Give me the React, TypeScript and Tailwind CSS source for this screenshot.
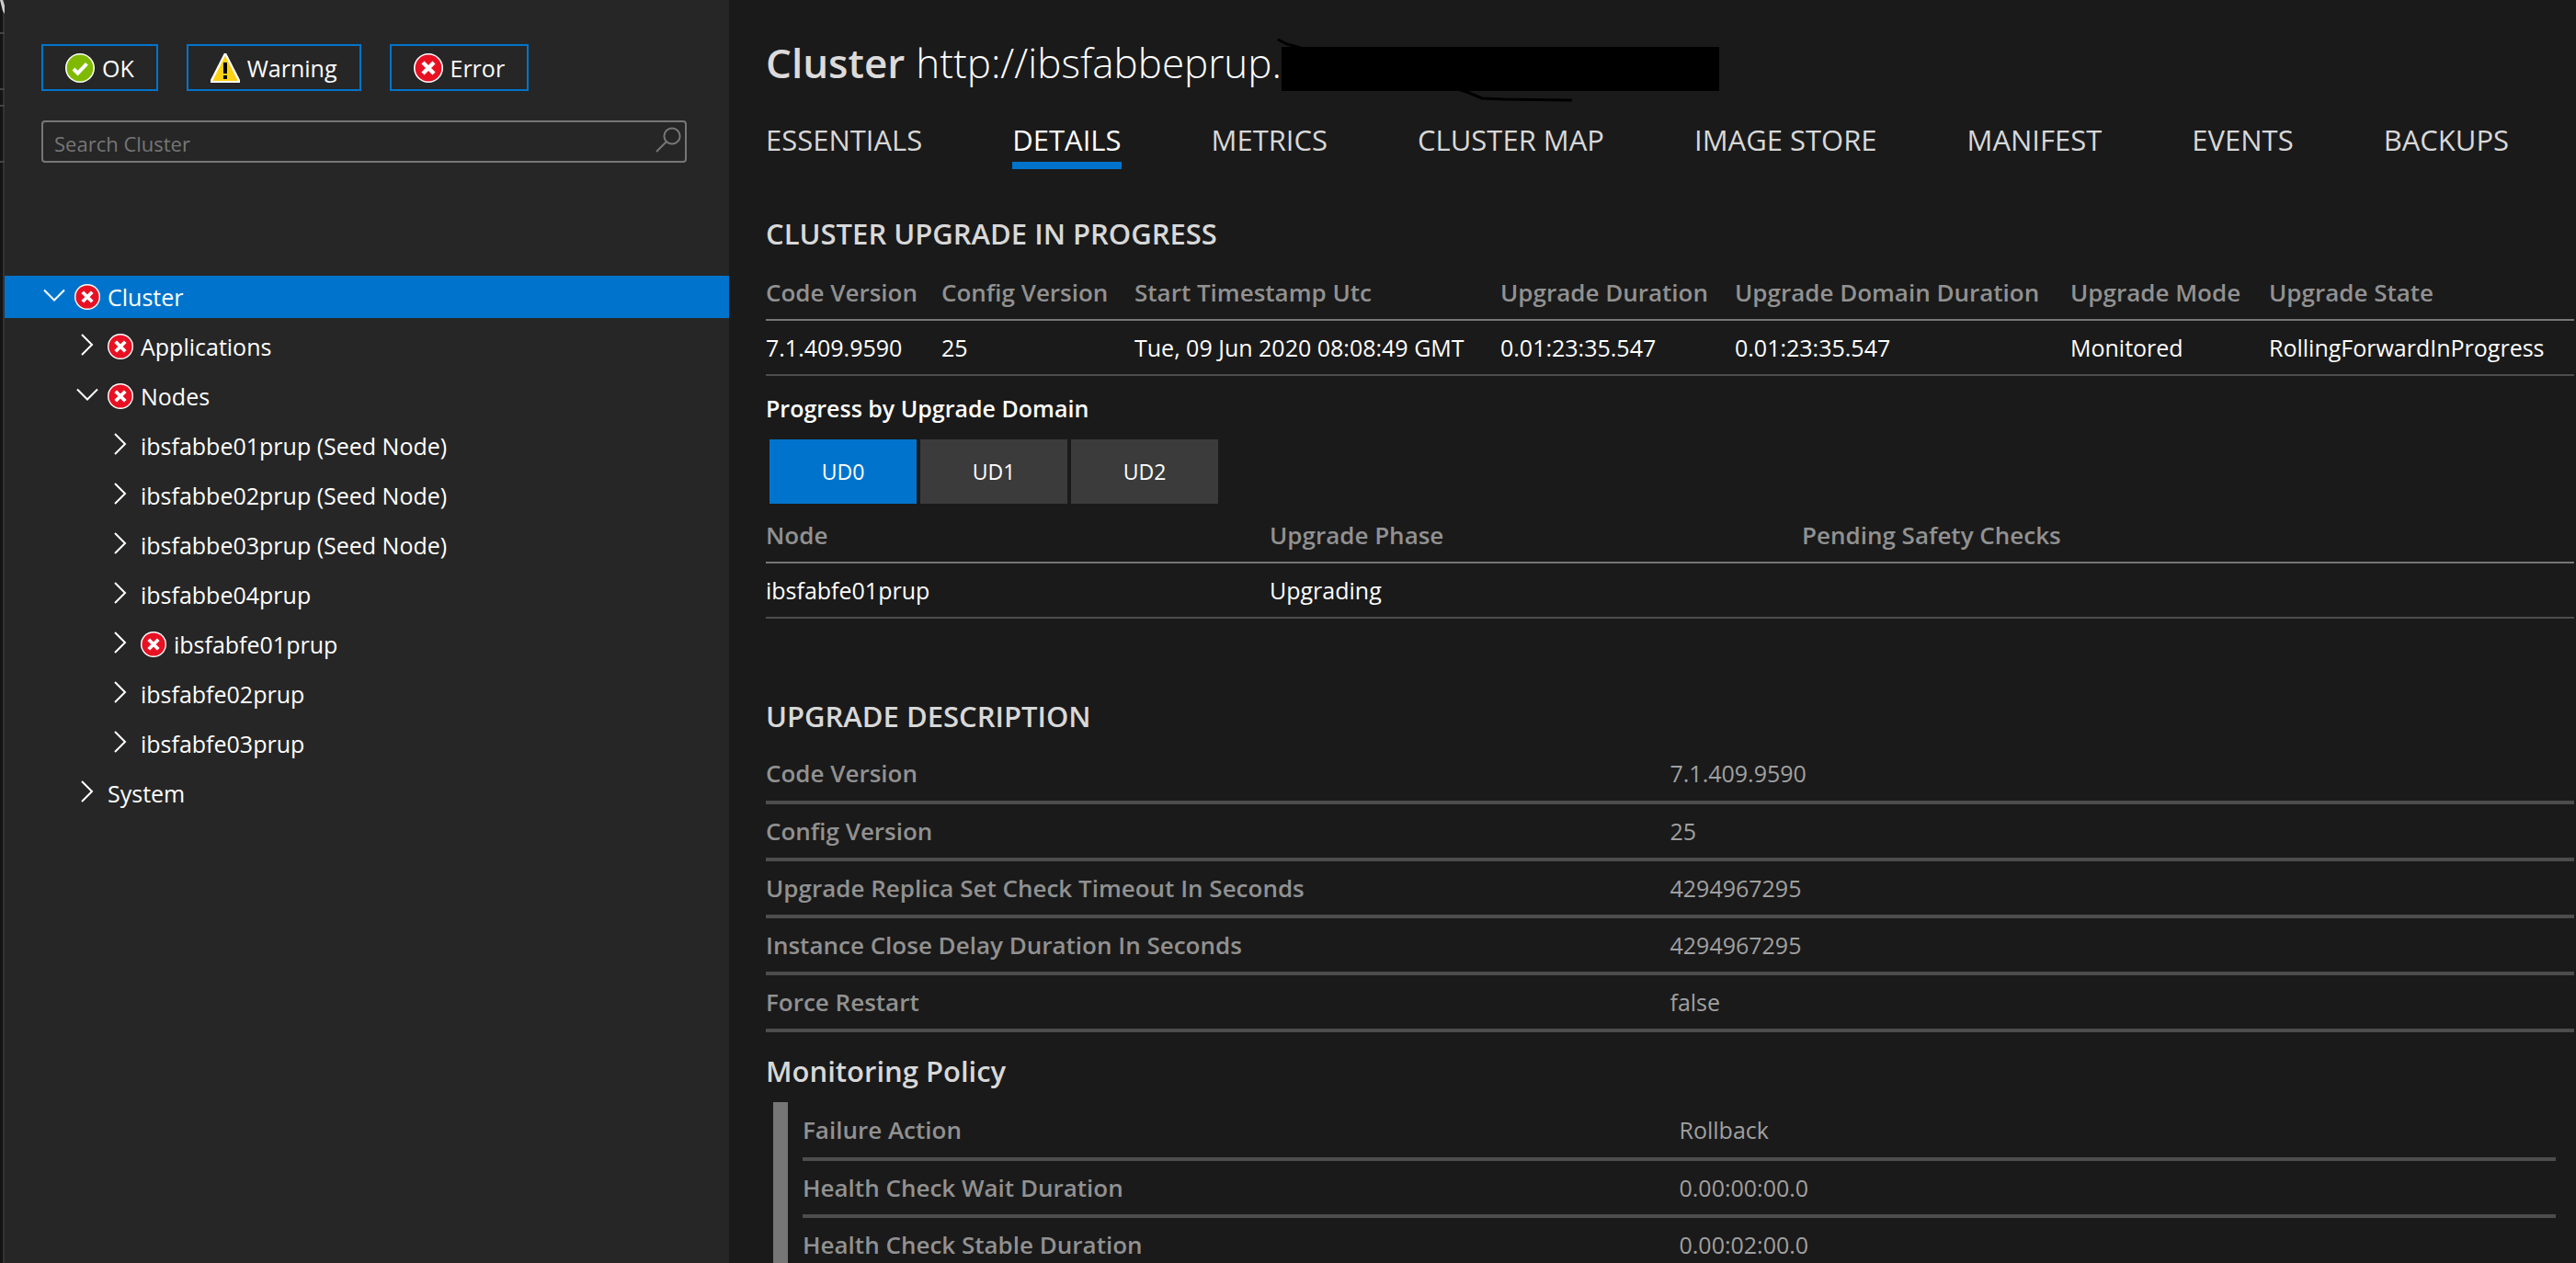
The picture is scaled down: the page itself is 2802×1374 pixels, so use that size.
import React, { useState } from 'react';

type Health = 'ok' | 'warning' | 'error';

interface TreeItem {
  label: string;
  level: number;
  expanded?: boolean;
  error?: boolean;
}

const filters: { label: string; health: Health }[] = [
  { label: 'OK', health: 'ok' },
  { label: 'Warning', health: 'warning' },
  { label: 'Error', health: 'error' },
];

const treeItems: TreeItem[] = [
  { label: 'Cluster', level: 0, expanded: true, error: true },
  { label: 'Applications', level: 1, error: true },
  { label: 'Nodes', level: 1, expanded: true, error: true },
  { label: 'ibsfabbe01prup (Seed Node)', level: 2 },
  { label: 'ibsfabbe02prup (Seed Node)', level: 2 },
  { label: 'ibsfabbe03prup (Seed Node)', level: 2 },
  { label: 'ibsfabbe04prup', level: 2 },
  { label: 'ibsfabfe01prup', level: 2, error: true },
  { label: 'ibsfabfe02prup', level: 2 },
  { label: 'ibsfabfe03prup', level: 2 },
  { label: 'System', level: 1 },
];

const indents = ['pl-[42px]', 'pl-[78px]', 'pl-[114px]'];

const tabs = ['ESSENTIALS', 'DETAILS', 'METRICS', 'CLUSTER MAP', 'IMAGE STORE', 'MANIFEST', 'EVENTS', 'BACKUPS'];

const upgradeColumns = [
  { title: 'Code Version', value: '7.1.409.9590', width: 'w-[191px]' },
  { title: 'Config Version', value: '25', width: 'w-[210px]' },
  { title: 'Start Timestamp Utc', value: 'Tue, 09 Jun 2020 08:08:49 GMT', width: 'w-[398px]' },
  { title: 'Upgrade Duration', value: '0.01:23:35.547', width: 'w-[255px]' },
  { title: 'Upgrade Domain Duration', value: '0.01:23:35.547', width: 'w-[365px]' },
  { title: 'Upgrade Mode', value: 'Monitored', width: 'w-[216px]' },
  { title: 'Upgrade State', value: 'RollingForwardInProgress', width: '' },
];

const nodeColumns = [
  { title: 'Node', value: 'ibsfabfe01prup', width: 'w-[548px]' },
  { title: 'Upgrade Phase', value: 'Upgrading', width: 'w-[579px]' },
  { title: 'Pending Safety Checks', value: '', width: '' },
];

const description = [
  ['Code Version', '7.1.409.9590'],
  ['Config Version', '25'],
  ['Upgrade Replica Set Check Timeout In Seconds', '4294967295'],
  ['Instance Close Delay Duration In Seconds', '4294967295'],
  ['Force Restart', 'false'],
];

const monitoringPolicy = [
  ['Failure Action', 'Rollback'],
  ['Health Check Wait Duration', '0.00:00:00.0'],
  ['Health Check Stable Duration', '0.00:02:00.0'],
];

function HealthIcon({ health, className }: { health: Health; className: string }) {
  if (health === 'warning') {
    return (
      <svg viewBox="0 0 32 32" className={className} aria-hidden="true">
        <path d="M14.8 0h2.4L32 29v3H0v-3Z" fill="#fff" />
        <path d="M16 2.6 29.8 30H2.2Z" fill="#ffd014" />
        <path d="M14 10h4v12h-4zM14 24h4v4h-4z" fill="#000" />
      </svg>
    );
  }
  return (
    <svg viewBox="0 0 32 32" className={className} aria-hidden="true">
      <circle cx="16" cy="16" r="16" fill="#fff" />
      <circle cx="16" cy="16" r="14.4" fill={health === 'ok' ? '#7fba00' : '#e81123'} />
      {health === 'ok' ? (
        <path d="m9 17 4.6 4.6L23.4 11.4" fill="none" stroke="#fff" strokeWidth="4" />
      ) : (
        <path d="m10 10 12 12M22 10 10 22" fill="none" stroke="#fff" strokeWidth="4.4" />
      )}
    </svg>
  );
}

function Chevron({ expanded }: { expanded?: boolean }) {
  return (
    <svg viewBox="0 0 24 24" className="w-6 h-6 mb-1 shrink-0" fill="none" stroke="#fff" strokeWidth="2" aria-hidden="true">
      {expanded ? <path d="M1 6.5 12 17.5 23 6.5" /> : <path d="M6 1 17 12 6 23" />}
    </svg>
  );
}

function DataTable({ columns }: { columns: { title: string; value: string; width: string }[] }) {
  return (
    <table className="w-full table-fixed text-left whitespace-nowrap">
      <thead>
        <tr className="h-[60px] border-b-2 border-[#767676] text-[26px] text-[#919191]">
          {columns.map((col) => (
            <th key={col.title} scope="col" className={`p-0 font-semibold ${col.width}`}>
              {col.title}
            </th>
          ))}
        </tr>
      </thead>
      <tbody>
        <tr className="h-[60px] border-b-2 border-[#4d4d4d] text-white">
          {columns.map((col) => (
            <td key={col.title} className="p-0">
              {col.value}
            </td>
          ))}
        </tr>
      </tbody>
    </table>
  );
}

function DetailList({ rows }: { rows: string[][] }) {
  return (
    <table className="w-full table-fixed text-left text-[#919191]">
      <tbody>
        {rows.map(([name, value]) => (
          <tr key={name} className="h-[62px] border-b-4 border-[#4d4d4d]">
            <th scope="row" className="w-1/2 p-0 text-[26px] font-semibold">
              {name}
            </th>
            <td className="w-1/2 p-0 text-[#a0a0a0]">{value}</td>
          </tr>
        ))}
      </tbody>
    </table>
  );
}

export default function App() {
  const [query, setQuery] = useState('');
  const [selected, setSelected] = useState('Cluster');
  const [activeTab, setActiveTab] = useState('DETAILS');
  const [domain, setDomain] = useState('UD0');

  return (
    <div className="flex h-screen overflow-hidden bg-[#1a1a1a] font-['Open_Sans',sans-serif] text-[25px] leading-9 text-white">
      {/* Edge of the pane behind the explorer */}
      <svg className="w-[5px] h-full shrink-0 bg-[#141414]" aria-hidden="true">
        <path d="M3 0h2v1374h-2z" fill="#333" />
        <path d="M0 35h5v2H0zM0 96h5v2H0zM0 114h5v2H0zM0 175h5v2H0z" fill="#444" />
        <path d="M0 0h3l2 6v9L3 12z" fill="#ccc" />
      </svg>

      {/* Sidebar */}
      <aside className="w-[788px] shrink-0 bg-[#262626]">
        <div className="flex gap-[31px] pl-10 pt-12">
          {filters.map((filter) => (
            <button
              key={filter.label}
              type="button"
              className="flex items-center gap-2 h-[51px] px-6 border-2 border-[#0074cc]"
            >
              <HealthIcon health={filter.health} className="w-8 h-8" />
              {filter.label}
            </button>
          ))}
        </div>

        <div className="flex items-center h-[46px] mt-8 ml-10 mr-[46px] border-2 border-[#767676] rounded-sm">
          <input
            type="text"
            aria-label="Search Cluster"
            placeholder="Search Cluster"
            value={query}
            onChange={(e) => setQuery(e.target.value)}
            className="flex-1 h-full px-3 pt-1 bg-transparent text-[22px] outline-none placeholder:text-[#767676]"
          />
          <svg viewBox="0 0 28 28" className="w-7 h-7 mr-1 mb-1" fill="none" stroke="#767676" strokeWidth="2" aria-hidden="true">
            <circle cx="18" cy="10" r="8.6" />
            <path d="M12 16 1 27" />
          </svg>
        </div>

        <ul className="flex flex-col gap-2 mt-[123px]">
          {treeItems.map((item) => (
            <li key={item.label}>
              <button
                type="button"
                onClick={() => setSelected(item.label)}
                className={`flex items-center gap-[10px] w-full h-[46px] text-left ${indents[item.level]} ${
                  selected === item.label ? 'bg-[#0074cc]' : ''
                }`}
              >
                <Chevron expanded={item.expanded} />
                <span className="flex items-center gap-2">
                  {item.error && <HealthIcon health="error" className="w-7 h-7" />}
                  {item.label}
                </span>
              </button>
            </li>
          ))}
        </ul>
      </aside>

      {/* Details */}
      <main className="flex-1 min-w-0 pl-10 pr-[2px] pt-9">
        <h1 className="flex items-center gap-3 h-16 text-[44px] text-[#dddada]">
          <span className="font-semibold">Cluster</span>
          <span className="relative font-light text-white">
            http://ibsfabbeprup.
            {/* Hidden part of the address */}
            <svg viewBox="0 0 484 72" className="absolute left-full top-1/2 w-[484px] h-[72px] -ml-2 -mt-[29px]" aria-hidden="true">
              <path d="M8 12h476v48H8z" fill="#000" />
              <path d="M4 4 14 9 36 15M200 58 212 62 226 68 250 69 324 70" fill="none" stroke="#000" strokeWidth="3" />
            </svg>
          </span>
        </h1>

        <nav className="flex gap-[98px] mt-8 text-[31px] leading-10 text-[#d8d8d8]">
          {tabs.map((tab) => (
            <button
              key={tab}
              type="button"
              onClick={() => setActiveTab(tab)}
              className={`pb-1 border-b-8 whitespace-nowrap ${
                activeTab === tab ? 'border-[#0074cc] text-white' : 'border-transparent'
              }`}
            >
              {tab}
            </button>
          ))}
        </nav>

        <h2 className="mt-12 text-[31px] leading-[44px] font-semibold text-[#d8d8d8]">CLUSTER UPGRADE IN PROGRESS</h2>
        <div className="mt-3">
          <DataTable columns={upgradeColumns} />
        </div>

        <h3 className="mt-[17px] font-semibold">Progress by Upgrade Domain</h3>
        <div className="flex gap-1 mt-4 mb-1 pl-1 text-[23px]">
          {['UD0', 'UD1', 'UD2'].map((name) => (
            <button
              key={name}
              type="button"
              onClick={() => setDomain(name)}
              className={`w-40 h-[70px] ${domain === name ? 'bg-[#0074cc]' : 'bg-[#3b3b3b]'}`}
            >
              {name}
            </button>
          ))}
        </div>
        <DataTable columns={nodeColumns} />

        <h2 className="mt-[84px] text-[31px] leading-[44px] font-semibold text-[#d8d8d8]">UPGRADE DESCRIPTION</h2>
        <div className="mt-[10px]">
          <DetailList rows={description} />
        </div>

        <h3 className="mt-5 text-[31px] leading-[44px] font-semibold text-[#d8d8d8]">Monitoring Policy</h3>
        <div className="ml-2 mr-5 mt-3 pl-4 border-l-16 border-[#767676]">
          <DetailList rows={monitoringPolicy} />
        </div>
      </main>
    </div>
  );
}
